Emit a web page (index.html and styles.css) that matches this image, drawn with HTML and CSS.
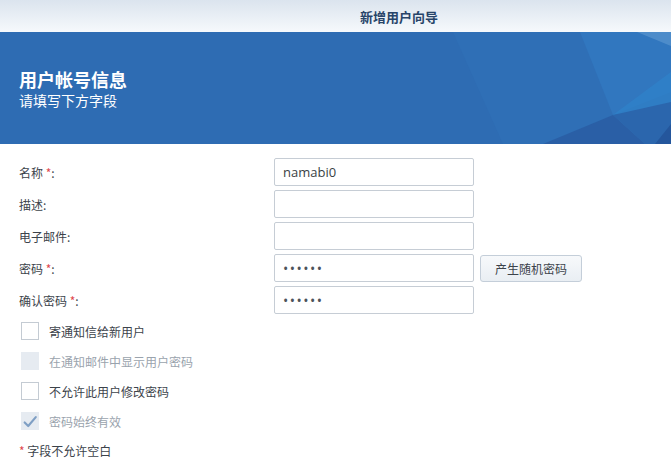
FILE: index.html
```html
<!DOCTYPE html>
<html lang="zh">
<head>
<meta charset="utf-8">
<link rel="stylesheet" href="styles.css">
</head>
<body>
<div class="titlebar"><span class="title">新增用户向导</span></div>
<div class="banner">
  <svg class="banner-art" width="671" height="112" viewBox="0 0 671 112" preserveAspectRatio="none">
    <polygon points="453,0 671,0 671,112 503,112" fill="#2f6fb6"/>
    <polygon points="580,0 671,0 671,60 613,83" fill="#3177bf"/>
    <polygon points="613,83 671,40 671,75" fill="#2f83cb" opacity="0.7"/>
    <polygon points="637,0 671,0 671,14" fill="#5a95cf" opacity="0.7"/>
    <polygon points="543,112 613,83 645,112" fill="#2a5fa6"/>
    <polygon points="613,83 671,70 671,112 645,112" fill="#2b66ad"/>
    <polygon points="655,112 671,92 671,112" fill="#24569c"/>
  </svg>
  <div class="banner-text">
    <div class="banner-title">用户帐号信息</div>
    <div class="banner-sub">请填写下方字段</div>
  </div>
</div>
<div class="form">
  <div class="row">
    <span class="label">名称 <span class="req">*</span>:</span>
    <div class="input">namabi0</div>
  </div>
  <div class="row">
    <span class="label">描述:</span>
    <div class="input"></div>
  </div>
  <div class="row">
    <span class="label">电子邮件:</span>
    <div class="input"></div>
  </div>
  <div class="row">
    <span class="label">密码 <span class="req">*</span>:</span>
    <div class="input dots">••••••</div>
    <div class="btn">产生随机密码</div>
  </div>
  <div class="row">
    <span class="label">确认密码 <span class="req">*</span>:</span>
    <div class="input dots">••••••</div>
  </div>
</div>
<div class="checks">
  <div class="check"><span class="box"></span><span class="clabel">寄通知信给新用户</span></div>
  <div class="check disabled"><span class="box"></span><span class="clabel">在通知邮件中显示用户密码</span></div>
  <div class="check"><span class="box"></span><span class="clabel">不允许此用户修改密码</span></div>
  <div class="check disabled"><span class="box checked"><svg width="18" height="18" viewBox="0 0 18 18"><path d="M3 9.5 L7 13.5 L15.5 3.5" fill="none" stroke="#7f9fc4" stroke-width="2.4" stroke-linecap="round" stroke-linejoin="round"/></svg></span><span class="clabel">密码始终有效</span></div>
</div>
<div class="note"><span class="req">*</span> 字段不允许空白</div>
</body>
</html>
```
FILE: styles.css
```css
html, body {
  margin: 0;
  padding: 0;
  background: #ffffff;
}
body {
  width: 671px;
  height: 472px;
  overflow: hidden;
  font-family: "Noto Sans CJK SC", "Open Sans", sans-serif;
  font-size: 12px;
  color: #3c434b;
}
.titlebar {
  height: 32px;
  background: linear-gradient(#dbe4ee, #f6f9fc);
  display: flex;
  align-items: center;
  padding-left: 360px;
  box-sizing: border-box;
}
.title {
  font-size: 13px;
  font-weight: bold;
  color: #274469;
}
.banner {
  position: relative;
  height: 112px;
  background: #2e6cb3;
  overflow: hidden;
}
.banner-art {
  position: absolute;
  left: 0;
  top: 0;
}
.banner-text {
  position: relative;
  padding: 36px 0 0 19px;
  color: #ffffff;
}
.banner-title {
  font-size: 18px;
  font-weight: bold;
  line-height: 22px;
}
.banner-sub {
  margin-top: 2px;
  font-size: 14px;
  line-height: 17px;
}
.form {
  padding: 14px 0 0 0;
  display: flex;
  flex-direction: column;
  gap: 4px;
}
.row {
  display: flex;
  align-items: center;
  height: 28px;
}
.label {
  width: 274px;
  padding-left: 19px;
  box-sizing: border-box;
  font-size: 12px;
  color: #3c434b;
}
.req {
  color: #e0474c;
}
.input {
  width: 200px;
  height: 28px;
  box-sizing: border-box;
  border: 1px solid #c6cdd5;
  border-radius: 2px;
  padding: 0 8px;
  display: flex;
  align-items: center;
  font-family: "Open Sans", sans-serif;
  font-size: 13px;
  color: #3a3f45;
  background: #fff;
}
.input.dots {
  font-size: 14px;
  letter-spacing: 1.5px;
  color: #4c535b;
}
.btn {
  margin-left: 6px;
  width: 102px;
  height: 27px;
  box-sizing: border-box;
  border: 1px solid #c4ced9;
  border-radius: 3px;
  background: linear-gradient(#f7f9fb, #e9eef3);
  display: flex;
  align-items: center;
  justify-content: center;
  font-size: 12px;
  color: #3c434b;
}
.checks {
  padding: 8px 0 0 21px;
  display: flex;
  flex-direction: column;
  gap: 12px;
}
.check {
  display: flex;
  align-items: center;
  height: 18px;
}
.box {
  width: 18px;
  height: 18px;
  box-sizing: border-box;
  border: 1px solid #c4cbd3;
  background: #fff;
  display: flex;
}
.check.disabled .box {
  background: #e6ebf1;
  border-color: #e6ebf1;
}
.clabel {
  margin-left: 10px;
  font-size: 12px;
  color: #3c434b;
}
.check.disabled .clabel {
  color: #9aa3ad;
}
.note {
  padding: 12px 0 0 19px;
  font-size: 12px;
  color: #3c434b;
}
```
